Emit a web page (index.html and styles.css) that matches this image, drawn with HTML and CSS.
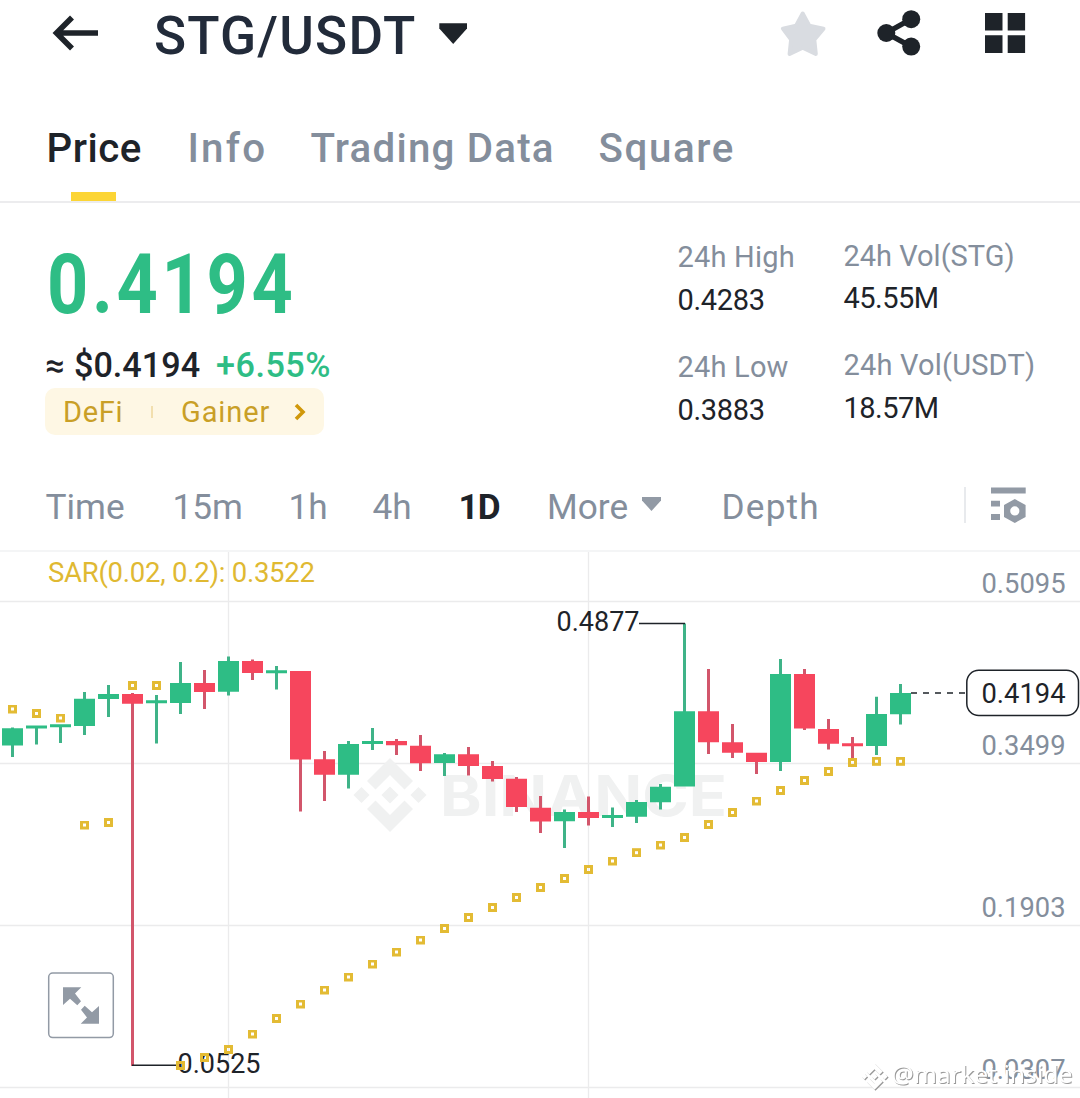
FILE: index.html
```html
<!DOCTYPE html>
<html lang="en">
<head>
<meta charset="utf-8">
<title>STG/USDT</title>
<link rel="stylesheet" href="styles.css">
</head>
<body>
<header class="header">
  <svg class="back" viewBox="52 14 47 38" width="47" height="38"><path d="M98 33H57M72 17.5 56.5 33 72 48.5" fill="none" stroke="#1e2329" stroke-width="5.6"/></svg>
  <h1 class="pair">STG/USDT</h1>
  <svg class="pair-caret" viewBox="439 23 28 21" width="28" height="21"><path d="M439.3 23.3H467V28.5L453.2 44 439.3 28.5Z" fill="#1e2329"/></svg>
  <div class="actions">
    <svg viewBox="780 10 46 47" width="46" height="47"><path d="M802.7 13.5 809.3 25.6 823.5 28.6 814.3 39.6 815.8 54 802.7 47.7 789.6 54 791.1 39.6 782.9 28.6 796.1 25.6Z" fill="#d9dce1" stroke="#d9dce1" stroke-width="4" stroke-linejoin="round"/></svg>
    <svg viewBox="876 9 46 48" width="46" height="48"><path d="M911.2 19 886.3 33 911.2 46.7" fill="none" stroke="#1e2329" stroke-width="5.4"/><g fill="#1e2329"><circle cx="886.3" cy="33" r="9"/><circle cx="911.2" cy="19.2" r="9"/><circle cx="911.2" cy="46.6" r="9"/></g></svg>
    <svg viewBox="985 13 41 40" width="41" height="40"><path d="M985 13h17.5v17.4H985zM1007.7 13h17.4v17.4h-17.4zM985 35.2h17.5V53H985zM1007.7 35.2h17.4V53h-17.4z" fill="#1e2329"/></svg>
  </div>
</header>

<nav class="tabs">
  <a class="tab tab-active">Price</a>
  <a class="tab tab-info">Info</a>
  <a class="tab">Trading Data</a>
  <a class="tab tab-square">Square</a>
</nav>

<section class="summary">
  <div class="quote">
    <div class="price">0.4194</div>
    <div class="fiat"><span class="approx">≈</span><span class="usd">$0.4194</span><span class="change">+6.55%</span></div>
    <div class="tags">
      <span class="tag-first">DeFi</span><i class="tag-line"></i><span class="tag-second">Gainer</span>
      <svg viewBox="0 0 12 18" width="12" height="18"><path d="M2 2 9 9 2 16" fill="none" stroke="#d0980b" stroke-width="3.6"/></svg>
    </div>
  </div>
  <dl class="stats">
    <dt>24h High</dt><dd>0.4283</dd>
    <dt>24h Low</dt><dd>0.3883</dd>
  </dl>
  <dl class="stats stats-volume">
    <dt>24h Vol(STG)</dt><dd>45.55M</dd>
    <dt class="wide">24h Vol(USDT)</dt><dd>18.57M</dd>
  </dl>
</section>

<nav class="intervals">
  <a>Time</a>
  <a>15m</a>
  <a>1h</a>
  <a>4h</a>
  <a class="interval-active">1D</a>
  <a class="more">More <svg viewBox="0 0 20 15" width="20" height="15"><path d="M0 0H19V3.5L9.5 14 0 3.5Z" fill="#929aa5"/></svg></a>
  <a class="depth">Depth</a>
  <i class="divider"></i>
  <svg class="settings" viewBox="990 486 36 38" width="36" height="38"><g fill="#929aa5"><path d="M991 487.5h34.7v6H991zM991 500.7h9v5.8h-9zM991 514h9v6h-9z"/><path fill-rule="evenodd" d="M1014.8 499 1025.6 505V517L1014.8 523 1004 517V505ZM1014.8 506.3a4.6 4.6 0 1 0 0 9.2a4.6 4.6 0 1 0 0-9.2Z"/></g></svg>
</nav>

<main class="chart-area">
<svg class="chart" viewBox="0 550 1080 548" width="1080" height="548">
  <defs>
    <marker id="dot" viewBox="0 0 9 9" refX="4.5" refY="4.5" markerWidth="9" markerHeight="9" markerUnits="userSpaceOnUse"><rect x="1.5" y="1.5" width="6" height="6" fill="none" stroke="#e3bb34" stroke-width="3"/></marker>
    <path id="logo" d="M0-37 23-14 14.5-5.5 0-20-14.5-5.5-23-14ZM0 37 23 14 14.5 5.5 0 20-14.5 5.5-23 14ZM0-8.5 8.5 0 0 8.5-8.5 0ZM-28.5-8-20.5 0-28.5 8-36.5 0ZM28.5-8 36.5 0 28.5 8 20.5 0Z"/>
  </defs>

  <path class="frame" d="M0 550.8H1080"/>
  <path class="grid" d="M0 601.5H1080M0 763.5H1080M0 925.5H1080M0 1087.5H1080M228.5 552V1098M588.5 552V1098"/>

  <g class="brand">
    <use href="#logo" x="390" y="795"/>
    <text x="440" y="815.5" textLength="287" lengthAdjust="spacingAndGlyphs">BINANCE</text>
  </g>

  <path class="wick up" d="M12.5 727.5V757M36.5 726V744.5M60.5 725V743M84.5 692V735M108.5 685V717M156.5 695V743.5M180.5 662V714M228.5 656.5V695.5M276.5 666V689.5M348.5 741V788.5M372.5 728V750M444.5 753V776M564.5 809.5V848M612.5 807.5V827M636.5 800V823M660.5 784V809.5M684.5 623.5V786M780.5 659V771M876.5 696.7V755M900.5 684V724.5"/>
  <path class="wick down" d="M132.5 693V1066M204.5 670V709M252.5 659.5V680M300.5 671V811.5M324.5 751V801M396.5 739V755M420.5 735V771M468.5 747V775.5M492.5 761V781.5M516.5 777V812M540.5 796V833M588.5 796.5V825.5M708.5 669V754M732.5 724V758M756.5 753V774M804.5 669V730M828.5 719V749.5M852.5 737V758"/>
  <path class="body up" d="M12.5 728.2V745.5M36.5 725.5V728.5M60.5 724.3V727.2M84.5 698.7V726M108.5 694V699M156.5 700.3V703.3M180.5 683V703M228.5 661V691.7M276.5 670.3V673.3M348.5 744V774.7M372.5 741V744M444.5 754.3V763M564.5 812V821.3M612.5 815V818M636.5 802V816.7M660.5 786.7V802.3M684.5 711.3V786.5M780.5 674V762M876.5 714V746M900.5 693V714.3"/>
  <path class="body down" d="M132.5 694V703.7M204.5 683V692M252.5 661V673M300.5 671V759.5M324.5 759.3V774.7M396.5 741V745.3M420.5 745.7V763.3M468.5 754.3V766M492.5 766V779M516.5 778.7V807M540.5 807.7V821.5M588.5 812V818M708.5 711.3V742.3M732.5 742.3V752.7M756.5 752.7V762M804.5 674V728.5M828.5 729V743.7M852.5 743.3V746.3"/>

  <path class="leader" d="M639 623.5H685M132 1065.3H178"/>
  <path class="leader dashed" d="M911 693H966"/>

  <text class="extreme" x="556.5" y="631" textLength="83" lengthAdjust="spacingAndGlyphs">0.4877</text>
  <text class="extreme" x="177.5" y="1073" textLength="83" lengthAdjust="spacingAndGlyphs">0.0525</text>
  <text class="sar-label" x="48" y="581.7" textLength="267">SAR(0.02, 0.2): 0.3522</text>

  <g class="axis">
    <text x="981.5" y="593" textLength="84" lengthAdjust="spacingAndGlyphs">0.5095</text>
    <text x="981.5" y="755" textLength="84" lengthAdjust="spacingAndGlyphs">0.3499</text>
    <text x="981.5" y="917" textLength="84" lengthAdjust="spacingAndGlyphs">0.1903</text>
    <text x="981.5" y="1079" textLength="84" lengthAdjust="spacingAndGlyphs">0.0307</text>
  </g>

  <polyline class="sar" points="12.5,709 36.5,713.5 60.5,718 84.5,825 108.5,822.5 132.5,685.5 156.5,685.5 180.5,1065.5 204.5,1057.5 228.5,1049.5 252.5,1034 276.5,1018.5 300.5,1004 324.5,990 348.5,977 372.5,964 396.5,952 420.5,940 444.5,928.5 468.5,917.5 492.5,907.5 516.5,897.5 540.5,887.5 564.5,878.5 588.5,869.5 612.5,861 636.5,852.7 660.5,845 684.5,837.5 708.5,824.5 732.5,812.5 756.5,801 780.5,790.5 804.5,780.5 828.5,771.5 852.5,762.5 876.5,761.3 900.5,761.3"/>

  <rect class="last-box" x="966.8" y="670.3" width="111.7" height="45.2" rx="12"/>
  <text class="last" x="981.5" y="703" textLength="84" lengthAdjust="spacingAndGlyphs">0.4194</text>

  <g class="expand">
    <rect x="48.7" y="973" width="64.6" height="64.6" rx="4"/>
    <path id="arrow" d="M63 987.3H81.3L75 993.4 81 1001.3 77.3 1005.3 70 998.7 63 1005Z"/>
    <use href="#arrow" transform="rotate(180 81 1005.5)"/>
  </g>

  <g class="author">
    <use href="#logo" transform="translate(874.5 1076.5) scale(.36)"/>
    <text x="891.5" y="1083" textLength="181" lengthAdjust="spacingAndGlyphs">@market inside</text>
  </g>
</svg>
</main>
</body>
</html>
```
FILE: styles.css
```css
* { box-sizing: border-box; }
body {
  margin: 0;
  width: 1080px;
  height: 1098px;
  overflow: hidden;
  background: #fff;
  color: #1e2329;
  font-family: Roboto, "Liberation Sans", sans-serif;
}
svg { display: block; flex: none; }
h1, dl, dd { margin: 0; }

.header {
  display: flex;
  align-items: center;
  height: 66px;
  padding: 0 54px 0 52px;
}
.pair {
  width: 285px;
  margin-left: 55px;
  padding-top: 6px;
  font-size: 53px;
  font-weight: 500;
  line-height: 66px;
  letter-spacing: 1.2px;
  color: #222b3a;
}
.actions {
  display: flex;
  align-items: center;
  margin-left: auto;
}
.actions svg:nth-child(2) { margin-left: 50px; }
.actions svg:nth-child(3) { margin-left: 63px; }

.tabs {
  display: grid;
  grid-template-columns: 141px 123px 288px auto;
  height: 137px;
  padding: 59px 0 0 46.5px;
  border-bottom: 2px solid #ececee;
  font-size: 40.3px;
  font-weight: 500;
  line-height: 48px;
  color: #848e9c;
}
.tab { letter-spacing: 1.2px; white-space: nowrap; }
.tab-info { letter-spacing: 2.2px; }
.tab-square { letter-spacing: 1.6px; }
.tab-active { color: #1e2329; width: 98px; letter-spacing: .5px; }
.tab-active::after {
  content: "";
  display: block;
  width: 45px;
  height: 9px;
  margin: 19px 0 0 24.5px;
  background: #fcd535;
}

.summary {
  display: grid;
  grid-template-columns: 632.5px 166px auto;
  height: 257px;
  padding-left: 45px;
}
.quote { padding-top: 42px; }
.price {
  width: 260px;
  margin-left: 2px;
  font-size: 83.5px;
  font-weight: 700;
  line-height: 80px;
  letter-spacing: 4.3px;
  color: #2ebd85;
  transform: scaleX(.862);
  transform-origin: left;
}
.fiat {
  display: flex;
  height: 46px;
  margin-top: 17px;
  font-size: 34.2px;
  font-weight: 500;
  line-height: 46px;
}
.approx { width: 29px; }
.usd { width: 142px; }
.change { color: #2ebd85; letter-spacing: .5px; }
.tags {
  display: flex;
  align-items: center;
  width: 279px;
  height: 47px;
  padding-left: 18px;
  border-radius: 10px;
  background: #fef7e4;
  font-size: 29px;
  color: #c99f27;
}
.tag-first { width: 88px; letter-spacing: .7px; }
.tag-line { width: 2px; height: 12px; background: #f2dfae; }
.tag-second { width: 113px; margin-left: 28px; letter-spacing: .9px; }

.stats {
  padding-top: 34px;
  font-size: 29px;
  line-height: 40px;
  letter-spacing: .2px;
}
.stats dt { color: #848e9c; white-space: nowrap; }
.stats dd { margin: 3px 0 27px; letter-spacing: -.3px; }
.stats-volume { padding-top: 33px; letter-spacing: 0; }
.stats-volume .wide { letter-spacing: .2px; }
.stats-volume dd { margin: 2px 0 27px; letter-spacing: -.5px; }
.stats-volume dd:last-child { margin-top: 3px; }

.intervals {
  display: grid;
  grid-template-columns: 127px 116px 84px 87px 87.5px 174.5px 242px 26px auto;
  align-items: center;
  height: 90px;
  padding: 4px 0 0 45.5px;
  font-size: 35.2px;
  color: #848e9c;
}
.interval-active { font-weight: 700; color: #1e2329; letter-spacing: -1px; margin-left: -1px; }
.more { display: flex; align-items: center; gap: 14px; }
.more svg { margin-top: -6px; }
.depth { letter-spacing: 1.2px; }
.divider { width: 2px; height: 36px; margin-top: -5px; background: #e8eaed; }
.settings { margin-top: -4px; }

.frame { stroke: #f4f5f6; stroke-width: 2.4; }
.grid { stroke: #ebebec; stroke-width: 1.3; fill: none; }
.brand { fill: #f0f1f1; }
.wick { stroke-width: 3; }
.body { stroke-width: 21; }
.up { stroke: #2ebd85; }
.down { stroke: #f6465d; }
.wick.up { stroke: #3fb388; }
.wick.down { stroke: #d2566b; }
.leader { fill: none; stroke: #1e2329; stroke-width: 1.4; }
.dashed { stroke-dasharray: 6 6; }
.chart text { font-size: 27.5px; }
.extreme, .last { fill: #1e2329; }
.sar-label { fill: #e0b932; }
.axis { fill: #848e9c; }
.sar { fill: none; stroke: none; marker: url(#dot); }
.last-box { fill: #fff; stroke: #1e2329; stroke-width: 1.5; }
.expand rect { fill: #fff; stroke: #929aa5; stroke-width: 1.5; }
.expand path, .expand use { fill: #929aa5; }
.chart .brand text { font: 700 56px Inter, sans-serif; }
.author { fill: #fff; filter: drop-shadow(1px 1px .4px #999); }
.chart .author text { font: 24px "Noto Sans", sans-serif; }
```
